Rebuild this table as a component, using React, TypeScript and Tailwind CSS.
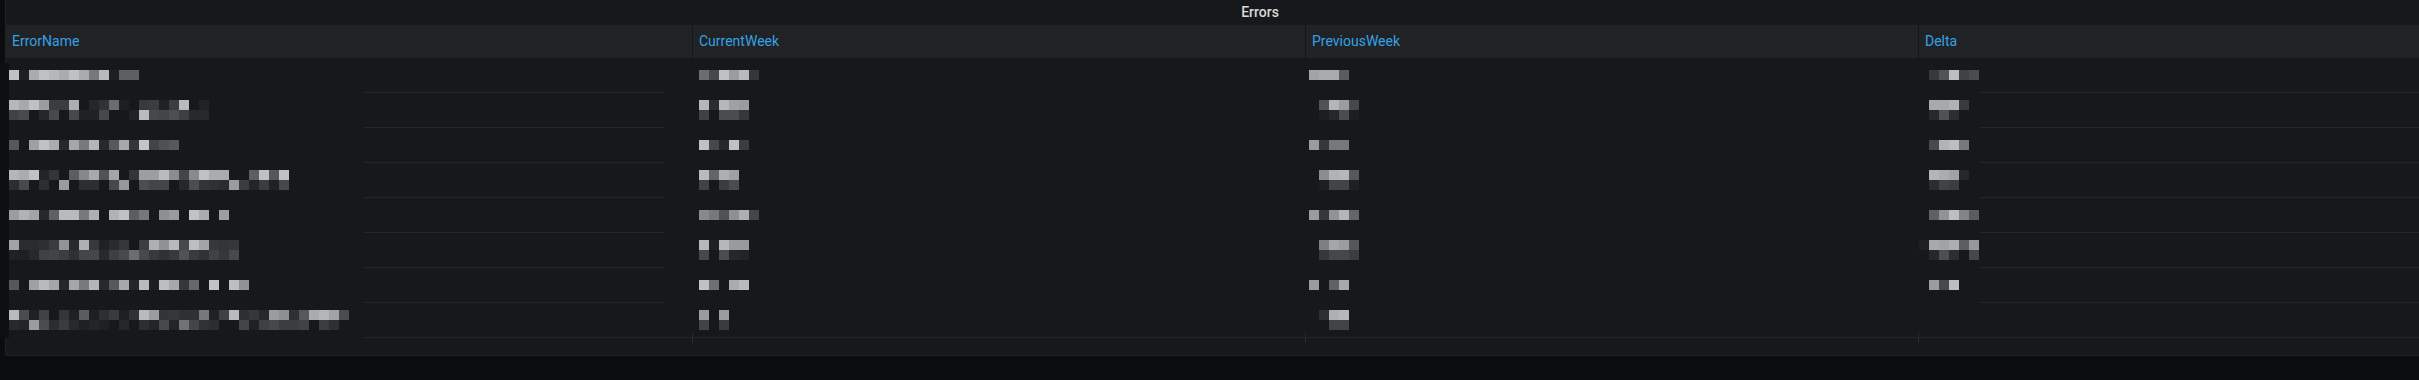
import React from "react";

type Lines = number[][];

const rows: { en: Lines; cw: Lines; pw: Lines; d: Lines }[] = [
  {
    en: [[191, 29, 169, 191, 181, 169, 191, 169, 118, 184, 28, 93, 93]],
    cw: [[106, 70, 191, 154, 184, 53]],
    pw: [[161, 169, 169, 90]],
    d: [[0, 55, 81, 188, 64, 74]],
  },
  {
    en: [
      [181, 166, 191, 154, 58, 58, 172, 0, 37, 48, 106, 29, 0, 55, 59, 31, 59, 184, 0, 32],
      [64, 72, 0, 37, 71, 0, 70, 31, 31, 70, 0, 0, 32, 184, 70, 67, 76, 61, 39, 39],
    ],
    cw: [
      [181, 42, 181, 159, 154],
      [63, 0, 74, 74, 53],
    ],
    pw: [
      [0, 80, 179, 154, 70],
      [0, 28, 37, 74, 28],
    ],
    d: [
      [0, 167, 167, 176, 57],
      [0, 38, 79, 44],
    ],
  },
  {
    en: [[85, 0, 158, 191, 170, 38, 164, 119, 179, 39, 86, 166, 51, 195, 66, 79, 86]],
    cw: [[191, 70, 38, 191, 58]],
    pw: [[154, 53, 118, 118]],
    d: [[0, 71, 177, 188, 118]],
  },
  {
    en: [
      [180, 169, 191, 34, 51, 0, 91, 133, 167, 80, 163, 0, 51, 156, 156, 185, 138, 67, 136, 191, 169, 169, 0, 0, 92, 191, 85, 191],
      [43, 71, 0, 44, 0, 154, 0, 44, 44, 0, 70, 149, 0, 75, 67, 67, 0, 37, 75, 50, 46, 42, 154, 58, 35, 58, 31, 70],
    ],
    cw: [
      [184, 99, 173, 158],
      [64, 0, 58, 74],
    ],
    pw: [
      [0, 138, 176, 181, 86],
      [0, 28, 66, 66, 30],
    ],
    d: [
      [0, 179, 171, 160, 37],
      [0, 43, 64, 59],
    ],
  },
  {
    en: [[154, 176, 162, 37, 94, 184, 184, 118, 174, 0, 176, 192, 92, 117, 0, 141, 153, 0, 192, 169, 0, 156]],
    cw: [[135, 118, 80, 141, 173, 67]],
    pw: [[154, 53, 144, 179, 99]],
    d: [[0, 94, 144, 188, 130, 90]],
  },
  {
    en: [
      [161, 42, 41, 45, 57, 145, 39, 174, 54, 31, 41, 53, 0, 59, 174, 143, 183, 70, 188, 162, 54, 51, 53],
      [31, 29, 38, 63, 66, 59, 46, 67, 69, 39, 61, 71, 107, 71, 55, 47, 55, 80, 57, 48, 64, 53, 71],
    ],
    cw: [
      [181, 30, 181, 152, 152],
      [70, 0, 74, 37, 34],
    ],
    pw: [
      [0, 125, 164, 154, 85],
      [0, 53, 69, 69, 59],
    ],
    d: [
      [30, 167, 161, 172, 92, 149],
      [0, 37, 76, 44, 0, 69],
    ],
  },
  {
    en: [[85, 0, 158, 184, 164, 37, 164, 119, 179, 39, 86, 166, 35, 184, 28, 188, 166, 53, 102, 0, 192, 0, 188, 144]],
    cw: [[191, 110, 0, 169, 184]],
    pw: [[154, 0, 95, 166]],
    d: [[0, 154, 71, 188]],
  },
  {
    en: [
      [184, 74, 31, 64, 0, 51, 30, 90, 29, 45, 57, 29, 47, 184, 154, 51, 53, 46, 47, 118, 31, 63, 184, 45, 53, 38, 154, 141, 46, 86, 169, 179, 161, 74],
      [39, 34, 154, 74, 43, 57, 39, 30, 35, 30, 0, 36, 0, 44, 34, 71, 34, 112, 67, 47, 43, 0, 0, 67, 30, 62, 70, 59, 59, 64, 0, 58, 45, 0],
    ],
    cw: [
      [154, 0, 154],
      [66, 0, 57],
    ],
    pw: [
      [0, 45, 173, 181],
      [0, 0, 66, 66],
    ],
    d: [],
  },
];

function Mosaic({ lines }: { lines: Lines }) {
  return (
    <div className="flex flex-col">
      {lines.map((l, i) => (
        <div key={i} className="flex">
          {l.map((v, j) => (
            <div
              key={j}
              className="w-[10px] h-[10px] shrink-0"
              style={{ backgroundColor: v ? `rgb(${v},${v + 3},${v + 6})` : "transparent" }}
            />
          ))}
        </div>
      ))}
    </div>
  );
}

function Divider({ full }: { full?: boolean }) {
  if (full) {
    return (
      <div className="h-px flex">
        <div className="w-[358px] shrink-0" />
        <div className="flex-1 bg-[#232529]" />
      </div>
    );
  }
  return (
    <div className="h-px flex">
      <div className="w-[358px] shrink-0" />
      <div className="w-[300px] shrink-0 bg-[#232529]" />
      <div className="w-[1316px] shrink-0" />
      <div className="flex-1 bg-[#232529]" />
    </div>
  );
}

export default function App() {
  return (
    <div
      className="relative w-[2419px] h-[380px] overflow-hidden bg-[#0b0c0e]"
      style={{ fontFamily: "Roboto, 'Liberation Sans', sans-serif" }}
    >
      <div className="relative ml-[5px] w-[2510px] h-[356px] bg-[#17181b] border-x border-b border-[#202226] rounded-b-[3px]">
        <div className="h-[25px] flex items-center justify-center text-[14px] font-medium text-[#d8d9da]">
          Errors
        </div>
        <div className="h-[33px] flex bg-[#212226] text-[14px] text-[#33a2e5]">
          <div className="w-[686px] shrink-0 flex items-center pl-[6px]">ErrorName</div>
          <div className="w-[613px] shrink-0 flex items-center pl-[6px] border-l border-[#141518]">CurrentWeek</div>
          <div className="w-[613px] shrink-0 flex items-center pl-[6px] border-l border-[#141518]">PreviousWeek</div>
          <div className="flex-1 flex items-center pl-[6px] border-l border-[#141518]">Delta</div>
        </div>
        {rows.map((r, i) => (
          <React.Fragment key={i}>
            <div className="h-[34px] flex">
              <div className="w-[686px] shrink-0 flex items-center pl-[3px]">
                <Mosaic lines={r.en} />
              </div>
              <div className="w-[613px] shrink-0 flex items-center pl-[7px]">
                <Mosaic lines={r.cw} />
              </div>
              <div className="w-[613px] shrink-0 flex items-center pl-[4px]">
                <Mosaic lines={r.pw} />
              </div>
              <div className="flex-1 flex items-center pl-[1px]">
                <Mosaic lines={r.d} />
              </div>
            </div>
            <Divider full={i === rows.length - 1} />
          </React.Fragment>
        ))}
        {/* column resize handles */}
        <div className="absolute left-[686px] top-[58px] w-px h-[5px] bg-[#141518]" />
        <div className="absolute left-[1299px] top-[58px] w-px h-[5px] bg-[#141518]" />
        <div className="absolute left-[1912px] top-[58px] w-px h-[5px] bg-[#141518]" />
        <div className="absolute left-[686px] top-[333px] w-px h-[10px] bg-[#2a2c30]" />
        <div className="absolute left-[1299px] top-[333px] w-px h-[10px] bg-[#2a2c30]" />
        <div className="absolute left-[1912px] top-[333px] w-px h-[10px] bg-[#2a2c30]" />
      </div>
      {/* redaction strip on the left edge */}
      <div className="absolute left-0 top-[63px] w-[9px] h-[275px] bg-[#0e0f12]" />
    </div>
  );
}
